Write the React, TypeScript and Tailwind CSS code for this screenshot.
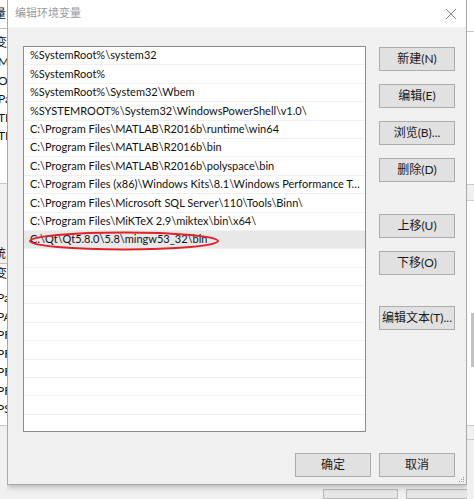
import React from 'react'

const paths = [
  '%SystemRoot%\\system32',
  '%SystemRoot%',
  '%SystemRoot%\\System32\\Wbem',
  '%SYSTEMROOT%\\System32\\WindowsPowerShell\\v1.0\\',
  'C:\\Program Files\\MATLAB\\R2016b\\runtime\\win64',
  'C:\\Program Files\\MATLAB\\R2016b\\bin',
  'C:\\Program Files\\MATLAB\\R2016b\\polyspace\\bin',
  'C:\\Program Files (x86)\\Windows Kits\\8.1\\Windows Performance Toolkit\\',
  'C:\\Program Files\\Microsoft SQL Server\\110\\Tools\\Binn\\',
  'C:\\Program Files\\MiKTeX 2.9\\miktex\\bin\\x64\\',
  'C:\\Qt\\Qt5.8.0\\5.8\\mingw53_32\\bin',
]

const font = { fontFamily: 'Lato, "Noto Sans CJK SC", sans-serif' }

function WinButton({ label, className = '' }: { label: string; className?: string }) {
  return (
    <div
      className={`flex h-[24px] w-[76px] items-center justify-center border border-[#adadad] bg-[#e1e1e1] text-[12px] text-[#1a1a1a] ${className}`}
    >
      {label}
    </div>
  )
}

// background window peeking out on the left
function LeftStrip() {
  const top = ['M', 'O', 'Pa', 'TE', 'TM']
  const sys = ['Pa', 'PA', 'PF', 'PF', 'PF', 'PF', 'PS']
  return (
    <div className="flex h-[499px] w-[7px] flex-col overflow-hidden bg-[#f0f0f0] text-[12px] leading-none text-[#111]">
      <div className="h-[28px] bg-white pt-[8px]">
        <span className="-ml-[6px] block">量</span>
      </div>
      <div className="h-[155px] border-t border-[#bdbdbd] bg-white pt-[8px]">
        <div className="-ml-[5px] h-[19px]">变</div>
        {top.map((t, i) => (
          <div key={i} className="-ml-[2px] h-[18.5px]">{t}</div>
        ))}
      </div>
      <div className="h-[80px] border-t border-[#c8c8c8] pt-[64px]">
        <span className="-ml-[6px] block">统</span>
      </div>
      <div className="h-[162px] border-t border-[#bdbdbd] bg-white pt-[4px]">
        <div className="-ml-[5px] h-[24px]">变</div>
        {sys.map((t, i) => (
          <div key={i} className="-ml-[3px] h-[18.5px]">{t}</div>
        ))}
      </div>
      <div className="flex-1 border-t border-[#c8c8c8]" />
    </div>
  )
}

function RightStrip() {
  return (
    <div className="flex h-[499px] w-[7px] flex-col bg-[#f0f0f0]">
      <div className="h-[31px] bg-white" />
      <div className="h-[153px] border-t border-[#c8c8c8] bg-white" />
      <div className="h-[16px] border-t border-[#c8c8c8]" />
      <div className="flex h-[225px] justify-end border-t border-[#d0d0d0] bg-white pt-[112px]">
        <div className="h-[54px] w-[3px] bg-[#c2c2c2]" />
      </div>
      <div className="h-[14px] border-t border-[#c8c8c8]" />
      <div className="flex-1 border-t border-[#c8c8c8]" />
    </div>
  )
}

export default function App() {
  return (
    <div className="flex h-[499px] w-[474px] overflow-hidden bg-[#f0f0f0]" style={font}>
      <LeftStrip />
      <div className="flex w-[460px] flex-col overflow-hidden">
        <div className="relative flex h-[492px] flex-col border-x border-b border-[#a8a8a8] bg-[#f0f0f0] shadow-[0_2px_6px_rgba(0,0,0,0.25)]">
          <div className="flex h-[27px] items-center justify-between bg-white pl-[7px] pr-[8px]">
            <span className="text-[11px] text-[#9a9a9a]">编辑环境变量</span>
            <svg width="12" height="12" viewBox="0 0 12 12" className="mr-[1px]">
              <path d="M1 1 L11 11 M11 1 L1 11" stroke="#8a8a8a" strokeWidth="1" />
            </svg>
          </div>
          <div className="flex pl-[15px] pt-[19px]">
            <div className="relative h-[386px] w-[343px] overflow-hidden border border-[#8c8c8c] bg-white">
              {Array.from({ length: 22 }).map((_, i) => (
                <div
                  key={i}
                  className={`flex h-[18.4px] items-center border-b border-[#f0f0f0] pl-[6px] pr-[5px] text-[11px] text-[#111] ${
                    i === 10 ? 'bg-[#e8e8e8]' : ''
                  }`}
                >
                  <span className="truncate whitespace-nowrap">{paths[i] ?? ''}</span>
                </div>
              ))}
              <svg className="absolute left-[3px] top-[183px]" width="196" height="22" viewBox="0 0 196 22">
                <ellipse cx="97" cy="11" rx="94" ry="8.5" fill="none" stroke="#e0222a" strokeWidth="2" />
              </svg>
            </div>
            <div className="ml-[13px] flex flex-col pt-[1px]">
              <WinButton label="新建(N)" />
              <WinButton label="编辑(E)" className="mt-[13px]" />
              <WinButton label="浏览(B)..." className="mt-[13px]" />
              <WinButton label="删除(D)" className="mt-[13px]" />
              <WinButton label="上移(U)" className="mt-[32px]" />
              <WinButton label="下移(O)" className="mt-[13px]" />
              <WinButton label="编辑文本(T)..." className="mt-[31px]" />
            </div>
          </div>
          <div className="mt-[21px] flex justify-end gap-[8px] pr-[11px]">
            <WinButton label="确定" />
            <WinButton label="取消" />
          </div>
          <div className="absolute bottom-[2px] right-[2px] grid grid-cols-3 gap-[1px]">
            {[0, 0, 1, 0, 1, 1, 1, 1, 1].map((v, i) => (
              <div key={i} className={`h-[1px] w-[1px] ${v ? 'bg-[#999]' : ''}`} />
            ))}
          </div>
        </div>
        <div className="flex gap-[8px] pl-[316px] pt-[4px]">
          <div className="h-[10px] w-[75px] shrink-0 border border-[#b8b8b8] bg-[#e6e6e6]" />
          <div className="h-[10px] w-[75px] shrink-0 border border-[#b8b8b8] bg-[#e6e6e6]" />
        </div>
      </div>
      <RightStrip />
    </div>
  )
}
